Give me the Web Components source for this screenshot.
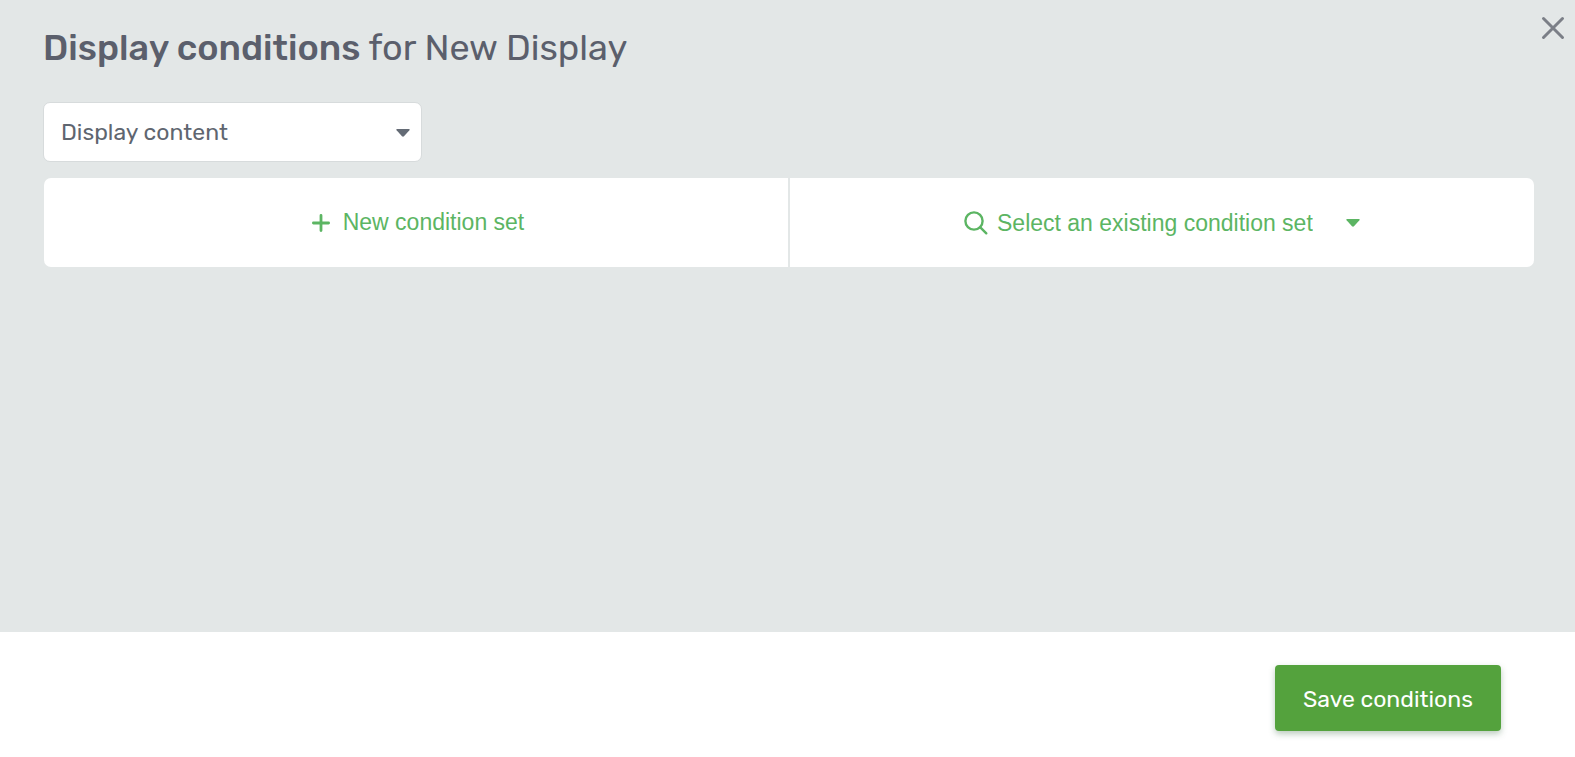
<!DOCTYPE html>
<html lang="en">
<head>
<meta charset="utf-8">
<meta name="viewport" content="width=device-width, initial-scale=1">
<title>Display conditions</title>
<style>
  body { margin: 0; font-family: Rubik, Roboto, sans-serif; color: #5b5f6c; background: #fff; }
</style>
</head>
<body>
<condition-dialog>
  <dialog-title slot="title" subject="for New Display">Display conditions</dialog-title>
  <close-button slot="close"></close-button>
  <mode-select label="Display mode">Display content</mode-select>
  <condition-bar>
    <new-set-button>New condition set</new-set-button>
    <existing-set-select label="Select an existing condition set"></existing-set-select>
  </condition-bar>
  <save-button slot="footer">Save conditions</save-button>
</condition-dialog>

<script>
  const define = (name, render) => customElements.define(name, class extends HTMLElement {
    connectedCallback() {
      if (!this.shadowRoot) this.attachShadow({ mode: "open" }).innerHTML = render(this);
    }
  });

  define("condition-dialog", () => `
    <style>
      :host { display: flex; flex-direction: column; min-height: 100vh; }
      main { flex: 1; background: #e3e7e7; }
      header { display: flex; justify-content: space-between; align-items: flex-start; padding: 16px 10px 0 43px; }
      .content { display: flex; flex-direction: column; gap: 16px; padding: 30px 41px 40px 43px; }
      footer { display: flex; justify-content: flex-end; padding: 33px 74px 26px; background: #fff; }
    </style>
    <main>
      <header><slot name="title"></slot><slot name="close"></slot></header>
      <div class="content"><slot></slot></div>
    </main>
    <footer><slot name="footer"></slot></footer>`);

  define("dialog-title", el => `
    <style>
      :host { display: block; padding-top: 8px; }
      h1 { margin: 0; font-size: 36px; line-height: 48px; font-weight: 400; }
      b { font-weight: 500; }
    </style>
    <h1><b><slot></slot></b> ${el.getAttribute("subject")}</h1>`);

  define("close-button", () => `
    <style>
      :host { display: block; }
      button { display: block; padding: 0; border: 0; background: none; cursor: pointer; }
      svg { display: block; }
    </style>
    <button type="button" aria-label="Close">
      <svg width="24" height="24" viewBox="0 0 24 24" fill="none" stroke="#7b7f87" stroke-width="3" stroke-linecap="round"><path d="M2.5 2.5l19 19M21.5 2.5l-19 19"/></svg>
    </button>`);

  define("mode-select", el => `
    <style>
      :host { display: grid; width: 379px; max-width: 100%; align-items: center; }
      select { grid-area: 1 / 1; appearance: none; box-sizing: border-box; width: 100%; height: 60px; padding: 0 44px 0 17px;
        border: 1px solid #d7dbdc; border-radius: 7px; background: #fff; color: #5f6670; font: 400 23px Rubik, Roboto, sans-serif; cursor: pointer; }
      svg { grid-area: 1 / 1; justify-self: end; margin: 2px 12px 0 0; z-index: 1; pointer-events: none; }
    </style>
    <select aria-label="${el.getAttribute("label")}"><option>${el.textContent}</option></select>
    <svg width="14" height="8" viewBox="0 0 14 8" fill="#646b75"><path d="M1 0h12q1.200 .2.400 1.200L8 7.200q-1 .900-2 0L.600 1.200Q-.200.200 1 0z"/></svg>`);

  define("condition-bar", () => `
    <style>
      :host { display: grid; grid-template-columns: 1fr 1fr; gap: 2px; height: 89px; margin-left: 1px; border-radius: 7px; overflow: hidden; }
    </style>
    <slot></slot>`);

  define("new-set-button", () => `
    <style>
      :host { display: grid; }
      button { display: flex; align-items: center; justify-content: center; gap: 13px; padding: 0 0 0 4px; border: 0; background: #fff;
        color: #5cb563; font: 400 23px "Liberation Sans", Arial, sans-serif; cursor: pointer; }
    </style>
    <button type="button">
      <svg width="18" height="18" viewBox="0 0 18 18" fill="none" stroke="currentColor" stroke-width="2.800" stroke-linecap="round"><path d="M9 1.400v15.200M1.400 9h15.200"/></svg>
      <slot></slot>
    </button>`);

  define("existing-set-select", el => `
    <style>
      :host { display: grid; }
      label { display: flex; align-items: center; justify-content: center; background: #fff; color: #5cb563; cursor: pointer; }
      select { appearance: none; margin: 0 33px 0 9px; padding: 0; border: 0; background: none; color: inherit;
        font: 400 23px "Liberation Sans", Arial, sans-serif; cursor: pointer; }
    </style>
    <label>
      <svg width="24" height="24" viewBox="0 0 24 24" fill="none" stroke="currentColor" stroke-width="2.400" stroke-linecap="round"><circle cx="10" cy="10" r="8.600"/><path d="M16.300 16.300l6 6"/></svg>
      <select aria-label="${el.getAttribute("label")}"><option>${el.getAttribute("label")}</option></select>
      <svg width="14" height="8" viewBox="0 0 14 8" fill="currentColor"><path d="M1 0h12q1.200 .2.400 1.200L8 7.200q-1 .900-2 0L.600 1.200Q-.200.200 1 0z"/></svg>
    </label>`);

  define("save-button", () => `
    <style>
      :host { display: block; }
      button { display: block; height: 66px; padding: 2px 28px 0; border: 0; border-radius: 4px; background: #54a23d; color: #fff;
        font: 400 23px Rubik, Roboto, sans-serif; box-shadow: 0 3px 6px rgba(60, 110, 70, .35); cursor: pointer; }
    </style>
    <button type="button"><slot></slot></button>`);
</script>
</body>
</html>
